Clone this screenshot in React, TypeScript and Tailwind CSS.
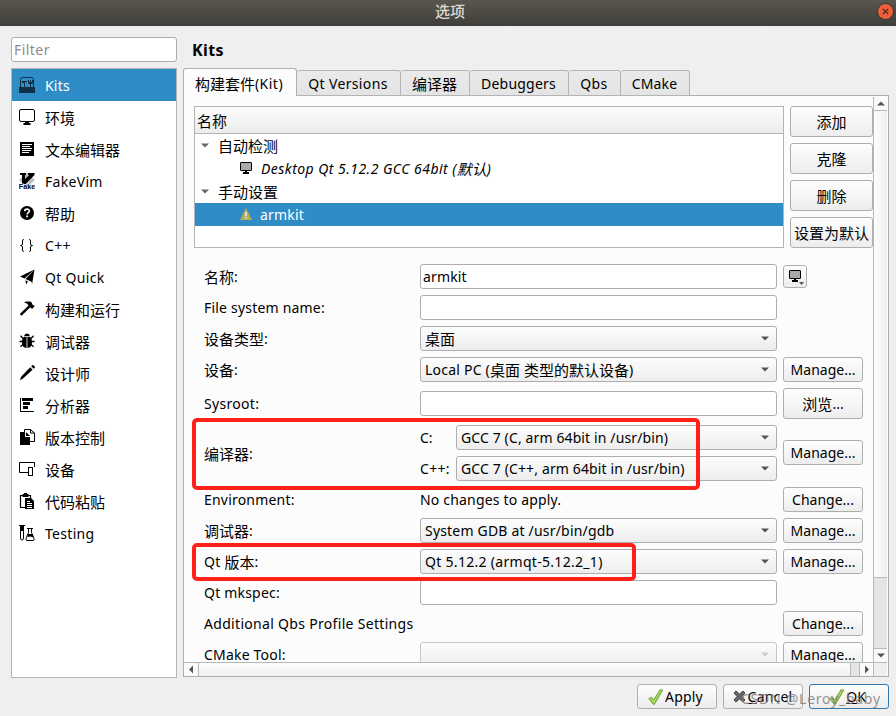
import React, { useState } from "react";
import clsx from "clsx";

const CJK = /([\u3000-\u9fff]+)/;

// Latin and Chinese runs are set in slightly different sizes
function Txt({ children, className }: { children: string; className?: string }) {
  return (
    <span className={clsx("whitespace-pre", className)}>
      {children.split(CJK).map((part, i) =>
        CJK.test(part) ? (
          <span key={i} className="align-[-1px] text-[15px] leading-none tracking-normal">{part}</span>
        ) : (
          <span key={i}>{part}</span>
        )
      )}
    </span>
  );
}

function Svg({ children }: { children: React.ReactNode }) {
  return (
    <svg width="16" height="16" viewBox="0 0 16 16" className="shrink-0">
      {children}
    </svg>
  );
}

const icons: Record<string, React.ReactNode> = {
  kits: (
    <Svg>
      <path d="M1.5 10V2.5a2 2 0 0 1 2-2h9a2 2 0 0 1 2 2V10" fill="none" stroke="#0d3046" />
      <path d="M0 10h16v6H0zM3 4h5v1H6v5H5V6H3zM9 3h1v2h1V3h1v2h1V3h1v3l-1 1h-1v3h-1V7h-1L9 6z" fill="#0d3046" />
    </Svg>
  ),
  environment: (
    <Svg>
      <rect x="0.5" y="0.5" width="15" height="12" rx="1.5" fill="none" stroke="#000" />
      <path d="M6 13h4v1h1.5v2h-7v-2H6z" />
    </Svg>
  ),
  editor: (
    <Svg>
      <path d="M1 1h14v14H1z" />
      <path d="M3 3.5h10M3 5.5h8M3 7.5h10M3 9.5h9M3 11.5h7" stroke="#fff" shapeRendering="crispEdges" />
    </Svg>
  ),
  fakevim: (
    <Svg>
      <path d="M8 0l8 7-8 7-8-7z" fill="#bdbdbd" />
      <path d="M1 0h6v2H6v4l4.200-4H9V0h6.500v2L6.500 11H3V2H1z" />
      <text x="-0.2" y="16" fontSize="6.5" fontWeight="700" textLength="16.4" lengthAdjust="spacingAndGlyphs" stroke="#fff" strokeWidth="0.8" paintOrder="stroke" fontFamily="Liberation Sans, sans-serif">Fake</text>
    </Svg>
  ),
  help: (
    <Svg>
      <circle cx="8" cy="8" r="7" />
      <path d="M5.700 6.200C5.800 3.400 10.400 3.500 10.300 6c0 1.600-2.200 1.600-2.200 3.400" fill="none" stroke="#fff" strokeWidth="1.600" />
      <path d="M7.200 10.500h1.800v1.800H7.200z" fill="#fff" />
    </Svg>
  ),
  cpp: (
    <Svg>
      <path d="M5 2.500H4.500Q3.500 2.500 3.500 4v3Q3.500 8.500 1.500 8.500 3.500 8.500 3.500 10v3q0 1.500 1 1.500H5M10 2.500h.5q1 0 1 1.500v3q0 1.500 2 1.500-2 0-2 1.500v3q0 1.500-1 1.500H10" fill="none" stroke="#000" />
    </Svg>
  ),
  quick: (
    <Svg>
      <path d="M15.500.5L1 7.500l4.500 2z M15.500.5L6.500 10l5.500 2.500c1 .5 1 2 1 3z M6.500 11.200l2.500 1.200-2 3z" />
    </Svg>
  ),
  build: (
    <Svg>
      <path d="M5 1.500l2-1h4.500L13 2l.3 1.500L15.800 5 13 8 11.300 6.300 2.500 14.800.8 13 9.500 4.500 8 2.500z" />
    </Svg>
  ),
  debugger: (
    <Svg>
      <path d="M5 3.200Q5.500.5 8 .5t3 2.700z" />
      <path d="M7.600 4v11Q3 14.500 3 9.500 3 5 5 4zM8.400 4v11q4.600-.5 4.600-5.500Q13 5 11 4z" />
      <path d="M1.500 2.800L4 5.500M14.500 2.800L12 5.500M.5 8.500H4M15.500 8.500H12M1.500 13.700L4 11.500M14.500 13.700L12 11.500" stroke="#000" strokeWidth="1.300" />
    </Svg>
  ),
  designer: (
    <Svg>
      <path d="M12.200 1.300l1-1.100h1.300l1.300 1.300v1.200l-1.100 1.100zM11.200 2.300l2.400 2.400L4 13.500.8 15.200 2.300 11.500z" />
    </Svg>
  ),
  analyzer: (
    <Svg>
      <path d="M1.500 1v13.500H15" fill="none" stroke="#000" shapeRendering="crispEdges" />
      <path d="M3 1h11v3H3zM4 5h7v3H4zM4 9h5v3H4z" />
    </Svg>
  ),
  vcs: (
    <Svg>
      <path d="M5.500 3V.5h6L15.500 4v8.500H11M11.500.5V4h4" fill="#fff" stroke="#000" />
      <path d="M1 3h5v5h5v8H1zM7 3l4 4H7z" />
    </Svg>
  ),
  devices: (
    <Svg>
      <path d="M9 11.500H.5v-10h15V6" fill="none" stroke="#000" />
      <rect x="9.500" y="6.500" width="4" height="8" fill="#fff" stroke="#000" />
      <path d="M9 14h5v1H9z" />
    </Svg>
  ),
  paste: (
    <Svg>
      <path d="M6 14.500H1.500v-12h10V5" fill="none" stroke="#000" strokeWidth="1.200" />
      <path d="M3.500 1H5V0h3v1h1.500v3h-6zM6 5h6l3 3v8H6z" />
      <path d="M8 8.500h3M8 10.500h5M8 12.500h5M8 14.500h5" stroke="#fff" shapeRendering="crispEdges" />
    </Svg>
  ),
  testing: (
    <Svg>
      <path d="M0 .5h6M1.500 1v12q0 2 1.500 2t1.500-2V1M8 3.500h6M9.500 4v3.500L7 13.500q-.5 2 1 2h6q1.500 0 1-2l-2.500-6V4" fill="none" stroke="#000" />
      <path d="M1 1h4v5H1zM9 9h4.500l1 3.500-3-1-3 .5z" />
    </Svg>
  ),
};

const pages = [
  { icon: "kits", label: "Kits", text: "tracking-[0.2px]" },
  { icon: "environment", label: "环境" },
  { icon: "editor", label: "文本编辑器" },
  { icon: "fakevim", label: "FakeVim", text: "tracking-[0.3px]" },
  { icon: "help", label: "帮助" },
  { icon: "cpp", label: "C++", text: "tracking-[0.3px]" },
  { icon: "quick", label: "Qt Quick", text: "tracking-[0.3px]" },
  { icon: "build", label: "构建和运行" },
  { icon: "debugger", label: "调试器" },
  { icon: "designer", label: "设计师" },
  { icon: "analyzer", label: "分析器" },
  { icon: "vcs", label: "版本控制" },
  { icon: "devices", label: "设备" },
  { icon: "paste", label: "代码粘贴" },
  { icon: "testing", label: "Testing", text: "tracking-[0.3px]" },
];

const tabs = [
  { label: "Qt Versions", width: "w-[104px]", text: "tracking-[0.35px]" },
  { label: "编译器", width: "w-[69px]" },
  { label: "Debuggers", width: "w-[99px]", text: "tracking-[0.2px]" },
  { label: "Qbs", width: "w-[52px]", text: "tracking-[0.4px]" },
  { label: "CMake", width: "w-[69px]", text: "tracking-[0.1px]" },
];

function Monitor({ className }: { className?: string }) {
  return (
    <svg width="12" height="12" viewBox="0 0 12 12" className={clsx("shrink-0", className)}>
      <rect x="0.500" y="0.500" width="11" height="8" rx="0.500" fill="#aaa" stroke="#000" />
      <path d="M5 9h2v1h2v2H3v-2h2z" />
    </svg>
  );
}

function Arrow({ className }: { className?: string }) {
  return (
    <svg width="8" height="5" viewBox="0 0 8 5" className={clsx("shrink-0", className ?? "text-[#555]")}>
      <path d="M0 0.500h8L4 4.500z" fill="currentColor" />
    </svg>
  );
}

function Button({ children, className, border }: { children: React.ReactNode; className?: string; border?: string }) {
  return (
    <button
      className={clsx(
        "flex shrink-0 items-center justify-center rounded-[3px] border bg-linear-to-b from-[#fefefe] to-[#ededed]",
        border ?? "border-[#aeaeae]",
        className ?? "h-[25px] w-20"
      )}
    >
      {children}
    </button>
  );
}

function Field({ value = "" }: { value?: string }) {
  return (
    <div className="flex h-[25px] w-[357px] shrink-0 items-center rounded-[3px] border border-[#aeaeae] bg-white pl-[2px]">
      <Txt className="tracking-[0.15px]">{value}</Txt>
    </div>
  );
}

function Combo({ value = "", className, text, disabled }: { value?: string; className?: string; text?: string; disabled?: boolean }) {
  return (
    <div
      className={clsx(
        "flex h-[25px] shrink-0 items-center justify-between rounded-[3px] border bg-linear-to-b from-[#fdfdfd] to-[#ededed] pr-[7px] pl-[4px]",
        disabled ? "border-[#c6c6c6]" : "border-[#aeaeae]",
        className ?? "w-[357px]"
      )}
    >
      <Txt className={text}>{value}</Txt>
      <Arrow className={disabled ? "text-[#ccc]" : undefined} />
    </div>
  );
}

function Row({ label, children, className, text }: { label: string; children?: React.ReactNode; className?: string; text?: string }) {
  return (
    <div className={clsx("flex shrink-0 items-center", className ?? "h-[25px]")}>
      <div className="w-[216px] shrink-0">
        <Txt className={text ?? "tracking-[0.2px]"}>{label}</Txt>
      </div>
      <div className="flex items-center gap-[6px]">{children}</div>
    </div>
  );
}

function Check() {
  return (
    <svg width="16" height="16" viewBox="0 0 16 16" className="-ml-[3px] shrink-0">
      <path d="M.8 9.500l2.700-1.300 2 2.800L12 .8l2.800.3L6.500 15.200H5z" fill="#a5d65c" stroke="#5c8f26" strokeWidth="0.800" />
    </svg>
  );
}

export default function App() {
  const [page, setPage] = useState("kits");

  return (
    <div className="relative flex h-[716px] w-[896px] flex-col overflow-hidden bg-[#efefef] font-['Noto_Sans','Noto_Sans_CJK_SC',sans-serif] text-[14px] leading-[20px] text-black">
      {/* Title bar */}
      <div className="flex h-[26px] shrink-0 items-center bg-linear-to-b from-[#59564f] to-[#3f3e39] pr-[2px]">
        <div className="w-[18px]" />
        <div className="flex-1 pb-[5px] pl-[5px] text-center text-[15px] font-medium text-[#dfdbd2]">选项</div>
        <svg width="17" height="17" viewBox="0 0 17 17" className="mb-[4px]">
          <circle cx="8.500" cy="8.500" r="8" fill="#ee6038" stroke="#353430" />
          <path d="M5.800 5.800l5.400 5.400M11.200 5.800l-5.400 5.400" stroke="#40241a" strokeWidth="1.200" />
        </svg>
      </div>

      <div className="flex h-[652px] shrink-0 pt-[11px] pl-[11px]">
        {/* Page list */}
        <div className="flex w-[166px] shrink-0 flex-col gap-[6px]">
          <div className="flex h-[25px] items-center rounded-[3px] border border-[#aeaeae] bg-white pl-[2px] text-[#8c8c8c]">
            <Txt className="tracking-[0.45px]">Filter</Txt>
          </div>
          <div className="h-[610px] border border-[#b4b4b4] bg-white">
            {pages.map((p) => (
              <div
                key={p.icon}
                onClick={() => setPage(p.icon)}
                className={clsx("flex h-8 items-center gap-[10px] pl-[7px]", p.icon === page && "bg-[#308cc6] text-white")}
              >
                {icons[p.icon]}
                <Txt className={clsx("pt-[2px]", p.text)}>{p.label}</Txt>
              </div>
            ))}
          </div>
        </div>

        <div className="ml-[6px] flex w-[706px] shrink-0 flex-col">
          <h1 className="h-[31px] pt-[3px] pl-[9px] text-[16px] font-bold tracking-[0.4px]">Kits</h1>

          {/* Tabs */}
          <div className="z-10 -mb-px flex h-[28px] shrink-0 items-end">
            <div className="flex h-[28px] w-[114px] items-center justify-center rounded-t-[3px] border border-b-0 border-[#aeaeae] bg-[#fcfcfc] pt-[2px] pr-[2px]">
              <Txt className="tracking-[0.5px]">构建套件(Kit)</Txt>
            </div>
            {tabs.map((t) => (
              <div
                key={t.label}
                className={clsx(
                  "flex h-[26px] items-center justify-center rounded-t-[3px] border border-l-0 border-[#b4b4b4] bg-linear-to-b from-[#eaeaea] to-[#e4e4e4] pr-px",
                  t.width
                )}
              >
                <Txt className={clsx("pt-[2px]", t.text)}>{t.label}</Txt>
              </div>
            ))}
          </div>

          {/* Tab pane */}
          <div className="h-[582px] shrink-0 border border-[#aeaeae] bg-[#fcfcfc]">
            <div className="flex h-[566px]">
              <div className="w-[689px] overflow-hidden pt-[10px] pl-[10px]">
                <div className="flex gap-[6px]">
                  <div className="h-[142px] w-[590px] shrink-0 border border-[#b4b4b4] bg-white">
                    <div className="flex h-[27px] items-center border-b border-[#b4b4b4] bg-linear-to-b from-[#fcfcfc] to-[#ececec] pt-[2px] pl-[2px]">
                      <Txt>名称</Txt>
                    </div>
                    <div className="flex h-[23px] items-center pl-[6px]">
                      <Arrow className="mr-[9px] text-[#666]" />
                      <Txt>自动检测</Txt>
                    </div>
                    <div className="flex h-[23px] items-center pl-[45px] italic">
                      <Monitor className="mb-[2px]" />
                      <Txt className="ml-[9px] pt-px tracking-[0.46px]">Desktop Qt 5.12.2 GCC 64bit (默认)</Txt>
                    </div>
                    <div className="flex h-[23px] items-center pl-[6px]">
                      <Arrow className="mr-[9px] text-[#666]" />
                      <Txt>手动设置</Txt>
                    </div>
                    <div className="flex h-[23px] items-center bg-[#308cc6] pl-[45px] text-white">
                      <svg width="12" height="12" viewBox="0 0 12 12" className="mb-px">
                        <path d="M6 0l6 12H0z" fill="#b5ad55" />
                        <path d="M5.200 4h1.600v4H5.200zM5.200 9h1.600v1.500H5.200z" fill="#e5eef5" />
                      </svg>
                      <Txt className="ml-[8px] tracking-[0.2px]">armkit</Txt>
                    </div>
                  </div>
                  <div className="flex flex-col gap-[6px]">
                    {["添加", "克隆", "删除", "设置为默认"].map((label) => (
                      <Button key={label} className="h-[31px] w-[83px]">
                        <Txt>{label}</Txt>
                      </Button>
                    ))}
                  </div>
                </div>

                {/* Kit form */}
                <div className="mt-[16px] flex flex-col gap-[6px] pl-[10px]">
                  <Row label="名称:">
                    <Field value="armkit" />
                    <Button className="h-[23px] w-6">
                      <Monitor className="mb-[2px] ml-[3px]" />
                      <svg width="5" height="3" viewBox="0 0 5 3" className="-mb-[13px] -ml-[2px] shrink-0">
                        <path d="M0 0h5L2.500 3z" fill="#555" />
                      </svg>
                    </Button>
                  </Row>
                  <Row label="File system name:">
                    <Field />
                  </Row>
                  <Row label="设备类型:">
                    <Combo value="桌面" />
                  </Row>
                  <Row label="设备:">
                    <Combo value="Local PC (桌面 类型的默认设备)" text="tracking-[0.22px]" />
                    <Button><Txt>Manage...</Txt></Button>
                  </Row>
                  <Row label="Sysroot:" className="h-[31px]" text="tracking-[0.3px]">
                    <Field />
                    <Button className="h-[31px] w-20"><Txt>浏览...</Txt></Button>
                  </Row>
                  <Row label="编译器:" className="h-[56px]" text="inline-block pt-[2px] tracking-[0.2px]">
                    <div className="flex w-[357px] flex-col gap-[6px]">
                      <div className="flex items-center">
                        <Txt className="w-9">C:</Txt>
                        <Combo value="GCC 7 (C, arm 64bit in /usr/bin)" className="w-[321px]" text="tracking-[0.12px]" />
                      </div>
                      <div className="flex items-center">
                        <Txt className="w-9 tracking-[0.3px]">C++:</Txt>
                        <Combo value="GCC 7 (C++, arm 64bit in /usr/bin)" className="w-[321px]" text="tracking-[0.13px]" />
                      </div>
                    </div>
                    <Button className="mb-px h-[25px] w-20"><Txt>Manage...</Txt></Button>
                  </Row>
                  <Row label="Environment:">
                    <Txt className="w-[357px] tracking-[0.18px]">No changes to apply.</Txt>
                    <Button><Txt>Change...</Txt></Button>
                  </Row>
                  <Row label="调试器:">
                    <Combo value="System GDB at /usr/bin/gdb" text="tracking-[0.19px]" />
                    <Button><Txt>Manage...</Txt></Button>
                  </Row>
                  <Row label="Qt 版本:" text="tracking-[0.3px]">
                    <Combo value="Qt 5.12.2 (armqt-5.12.2_1)" text="tracking-[0.3px]" />
                    <Button><Txt>Manage...</Txt></Button>
                  </Row>
                  <Row label="Qt mkspec:">
                    <Field />
                  </Row>
                  <Row label="Additional Qbs Profile Settings" text="tracking-[0.31px]">
                    <div className="w-[357px]" />
                    <Button><Txt>Change...</Txt></Button>
                  </Row>
                  <Row label="CMake Tool:">
                    <Combo disabled />
                    <Button><Txt>Manage...</Txt></Button>
                  </Row>
                </div>
              </div>

              {/* Vertical scrollbar */}
              <div className="mt-px flex w-[14px] flex-col border-l border-[#b9b9b9] bg-[#e4e4e4]">
                <div className="flex h-[14px] items-center justify-center border-b border-[#b9b9b9] bg-[#fafafa]">
                  <Arrow className="rotate-180 text-[#555]" />
                </div>
                <div className="h-[467px] border-b border-[#b9b9b9] bg-linear-to-r from-[#fdfdfd] to-[#f0f0f0]" />
                <div className="flex-1" />
                <div className="flex h-[14px] items-center justify-center border-t border-[#b9b9b9] bg-[#fafafa]">
                  <Arrow className="text-[#555]" />
                </div>
              </div>
            </div>

            {/* Horizontal scrollbar */}
            <div className="flex h-[14px] w-[703px] border-t border-[#b9b9b9] bg-[#e4e4e4]">
              <div className="flex w-[15px] items-center justify-center border-r border-[#b9b9b9] bg-[#fafafa]">
                <Arrow className="rotate-90 text-[#555]" />
              </div>
              <div className="w-[652px] border-r border-[#b9b9b9] bg-linear-to-b from-[#fdfdfd] to-[#f0f0f0]" />
              <div className="w-[8px]" />
              <div className="flex w-[14px] items-center justify-center border-l border-[#b9b9b9] bg-[#fafafa]">
                <Arrow className="-rotate-90 text-[#555]" />
              </div>
              <div className="flex-1 border-l border-[#b9b9b9] bg-[#efefef]" />
            </div>
          </div>
        </div>
      </div>

      {/* Dialog buttons */}
      <div className="mt-[6px] flex justify-end gap-[6px] pr-[7px]">
        <Button className="h-[25px] w-20 gap-px">
          <Check />
          <Txt className="tracking-[0.2px]">Apply</Txt>
        </Button>
        <Button className="h-[25px] w-20 gap-[2px]">
          <svg width="13" height="13" viewBox="0 0 13 13" className="-ml-px shrink-0">
            <path d="M1 3l2-2 3.500 3L10 1l2 2-3 3.500L12 10l-2 2-3.500-3L3 12l-2-2 3-3.500z" fill="#666" stroke="#4a4a4a" />
          </svg>
          <span className="tracking-[0.2px]"><u>C</u>ancel</span>
        </Button>
        <Button className="h-[25px] w-20 gap-px" border="border-[#2f7aa8]">
          <Check />
          <span><u>O</u>K</span>
        </Button>
      </div>

      {/* Highlight frames */}
      <div className="absolute top-[418px] left-[192px] h-[72px] w-[508px] rounded-[5px] border-4 border-[#ff2018]" />
      <div className="absolute top-[543px] left-[192px] h-[38px] w-[444px] rounded-[5px] border-4 border-[#ff2018]" />

      <div className="absolute top-[689px] left-[741px] text-[14px] tracking-[0.75px] whitespace-nowrap text-[#808080]/85">CSDN @Leroy_baby</div>
    </div>
  );
}
